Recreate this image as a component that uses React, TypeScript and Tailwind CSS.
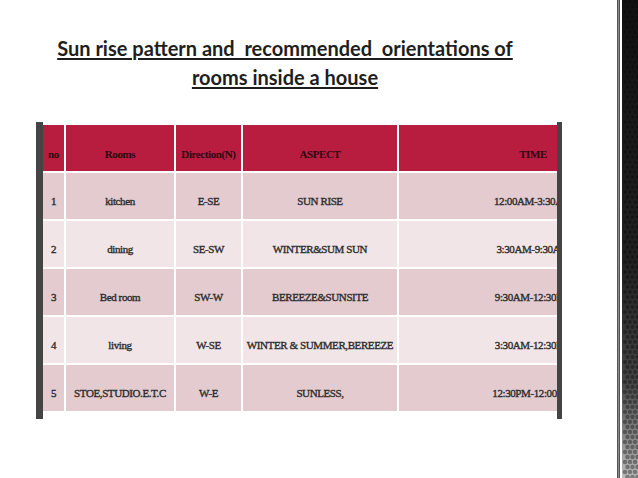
import React from 'react';

// Sun rise / room orientation table slide
const rows = [
  { no: '1', room: 'kitchen', dir: 'E-SE', aspect: 'SUN RISE', time: '12:00AM-3:30AM' },
  { no: '2', room: 'dining', dir: 'SE-SW', aspect: 'WINTER&SUM SUN', time: '3:30AM-9:30AM' },
  { no: '3', room: 'Bed room', dir: 'SW-W', aspect: 'BEREEZE&SUNSITE', time: '9:30AM-12:30PM' },
  { no: '4', room: 'living', dir: 'W-SE', aspect: 'WINTER & SUMMER,BEREEZE', time: '3:30AM-12:30PM' },
  { no: '5', room: 'STOE,STUDIO.E.T.C', dir: 'W-E', aspect: 'SUNLESS,', time: '12:30PM-12:00AM' },
];

const headers = ['no', 'Rooms', 'Direction(N)', 'ASPECT', 'TIME'];

// dark halftone strip on the right edge, drawn as an svg
const SideDecor: React.FC = () => {
  const dots: React.ReactNode[] = [];
  for (let y = 2; y < 478; y += 5) {
    for (let x = 2; x < 16; x += 5) {
      const t = y / 478;
      const r = 1 + t * 1.3;
      dots.push(<circle key={`${x}-${y}`} cx={x + ((y / 5) % 2) * 2.5} cy={y} r={r} fill="#000" fillOpacity={0.35} />);
    }
  }
  return (
    <div className="w-[21px] h-[478px] flex shrink-0">
      <div className="w-[3px] h-full bg-[#8a8a8a] border-x border-[#555]" />
      <div className="w-[2px] h-full bg-white" />
      <svg width="16" height="478" viewBox="0 0 16 478" className="block shrink-0">
        <defs>
          <linearGradient id="stripFade" x1="0" y1="0" x2="0" y2="478" gradientUnits="userSpaceOnUse">
            <stop offset="0" stopColor="#101010" />
            <stop offset="0.55" stopColor="#222222" />
            <stop offset="0.8" stopColor="#454545" />
            <stop offset="1" stopColor="#bdbdbd" />
          </linearGradient>
        </defs>
        <rect x="0" y="0" width="16" height="478" fill="url(#stripFade)" />
        {dots}
      </svg>
    </div>
  );
};

const App: React.FC = () => {
  return (
    <div className="w-[638px] h-[478px] bg-white flex overflow-hidden">
      <div className="flex-1 flex flex-col">
        {/* Title */}
        <div className="w-[570px] pt-[34px] text-center font-bold text-[#1e1e1e] text-[20px] leading-[29px] font-['Lato',sans-serif]">
          <p>
            <span className="underline decoration-2 underline-offset-[2px] whitespace-pre">
              Sun rise pattern and  recommended  orientations of
            </span>
          </p>
          <p>
            <span className="underline decoration-2 underline-offset-[2px]">rooms inside a house</span>
          </p>
        </div>

        {/* Table framed by dark bars */}
        <div className="mt-[30px] ml-[36px] w-[526px] h-[297px] border-l-[7px] border-r-[5px] border-[#444] pt-[3px] bg-white">
          <div className="w-[514px] overflow-hidden">
            <div className="grid grid-cols-[21px_108px_65px_154px_268px] gap-[2px] w-[622px] font-['Liberation_Serif',serif] text-[11px] tracking-[-0.4px]">
              {headers.map((h) => (
                <div
                  key={h}
                  className="h-[46px] bg-[#b81d40] flex items-center justify-center pt-[12px] font-bold text-[#2a0810]"
                >
                  {h}
                </div>
              ))}
              {rows.map((r, i) => {
                const bg = i % 2 === 0 ? 'bg-[#e3cbd0]' : 'bg-[#f1e5e7]';
                return [r.no, r.room, r.dir, r.aspect, r.time].map((v, j) => (
                  <div
                    key={`${i}-${j}`}
                    className={`h-[46px] ${bg} flex items-center justify-center pt-[11px] text-[#2b2b2b] whitespace-nowrap [-webkit-text-stroke:0.35px_#2b2b2b]`}
                  >
                    {v}
                  </div>
                ));
              })}
            </div>
          </div>
        </div>
      </div>
      <SideDecor />
    </div>
  );
};

export default App;
